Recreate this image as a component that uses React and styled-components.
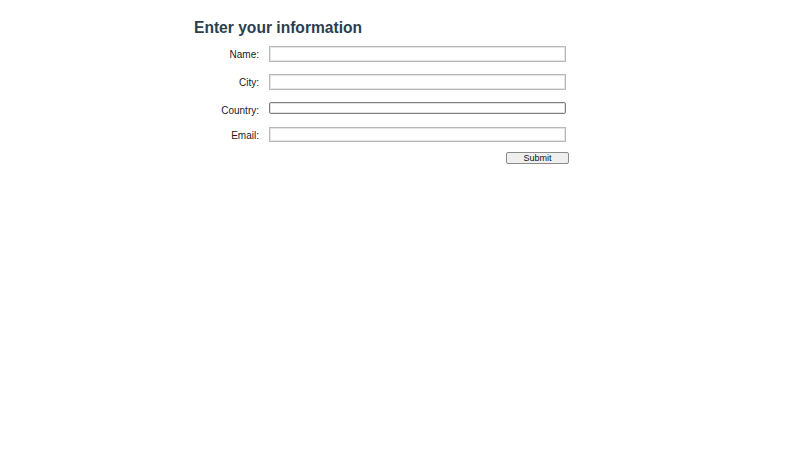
import React from "react";
import styled, { createGlobalStyle } from "styled-components";

const Global = createGlobalStyle`
  html, body { margin: 0; padding: 0; background: #ffffff; }
  body { font-family: "Liberation Sans", Arial, sans-serif; }
`;

const Page = styled.div`
  width: 412px;
  margin: 0 auto;
  padding-top: 18px;
`;

const Title = styled.h1`
  margin: 0 0 9px 0;
  font-size: 15.6px;
  font-weight: bold;
  line-height: 19px;
  color: #2c3e50;
`;

const Form = styled.form`
  display: flex;
  flex-direction: column;
`;

const Row = styled.div`
  display: flex;
  align-items: center;
  gap: 10px;
  height: ${(p) => p.$h}px;
  margin-bottom: ${(p) => p.$mb}px;
`;

const Label = styled.label`
  width: 65px;
  text-align: right;
  font-size: 10px;
  line-height: 12px;
  color: #1a1a1a;
  padding-top: ${(p) => p.$pt ?? 2}px;
`;

const Input = styled.input`
  box-sizing: border-box;
  width: 297px;
  height: ${(p) => p.$h || 16}px;
  margin: 0;
  padding: 0 3px;
  border: 1px solid #b9b9b9;
  box-shadow: inset 0 0 0 1px #e4e4e4;
  border-radius: 0;
  background: #fff;
  font-size: 10px;
  outline: none;
`;

const Select = styled.select`
  appearance: none;
  -webkit-appearance: none;
  box-sizing: border-box;
  width: 297px;
  height: 12px;
  margin: 0;
  padding: 0;
  border: 1px solid #7f7f7f;
  box-shadow: inset 0 0 0 1px #e2e2e2;
  border-radius: 2px;
  background: #fff;
  font-size: 8px;
  outline: none;
`;

const Actions = styled.div`
  display: flex;
  justify-content: flex-end;
  width: 375px;
`;

const Button = styled.button`
  box-sizing: border-box;
  width: 63px;
  height: 12px;
  margin: 0;
  padding: 0;
  border: 1px solid #8a8a8a;
  border-radius: 2px;
  background: #efefef;
  font-family: "Liberation Sans", Arial, sans-serif;
  font-size: 9px;
  line-height: 10px;
  color: #111;
`;

export default function App() {
  return (
    <>
      <Global />
      <Page>
        <Title>Enter your information</Title>
        <Form onSubmit={(e) => e.preventDefault()}>
          <Row $h={16} $mb={12}>
            <Label>Name:</Label>
            <Input type="text" />
          </Row>
          <Row $h={16} $mb={12}>
            <Label>City:</Label>
            <Input type="text" />
          </Row>
          <Row $h={12} $mb={13}>
            <Label $pt={5}>Country:</Label>
            <Select />
          </Row>
          <Row $h={15} $mb={10}>
            <Label>Email:</Label>
            <Input type="email" $h={15} />
          </Row>
          <Actions>
            <Button type="submit">Submit</Button>
          </Actions>
        </Form>
      </Page>
    </>
  );
}
